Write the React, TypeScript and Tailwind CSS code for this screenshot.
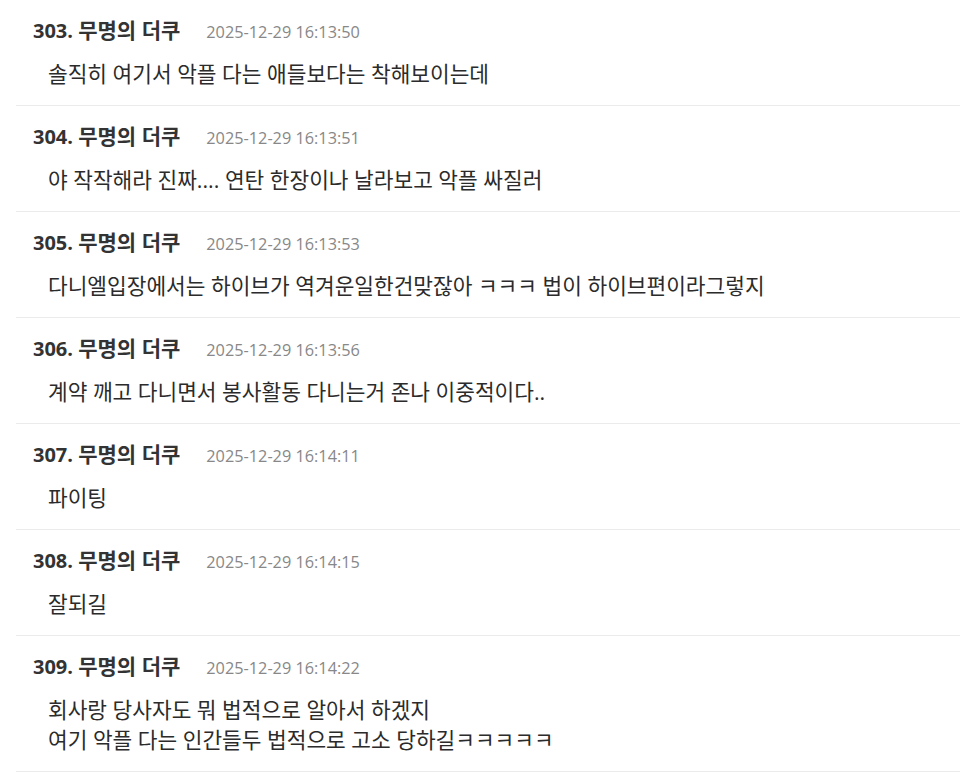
const COMMENTS = [
  { no: 303, time: '2025-12-29 16:13:50', lines: ['솔직히 여기서 악플 다는 애들보다는 착해보이는데'] },
  { no: 304, time: '2025-12-29 16:13:51', lines: ['야 작작해라 진짜.... 연탄 한장이나 날라보고 악플 싸질러'] },
  { no: 305, time: '2025-12-29 16:13:53', lines: ['다니엘입장에서는 하이브가 역겨운일한건맞잖아 ㅋㅋㅋ 법이 하이브편이라그렇지'] },
  { no: 306, time: '2025-12-29 16:13:56', lines: ['계약 깨고 다니면서 봉사활동 다니는거 존나 이중적이다..'] },
  { no: 307, time: '2025-12-29 16:14:11', lines: ['파이팅'] },
  { no: 308, time: '2025-12-29 16:14:15', lines: ['잘되길'] },
  {
    no: 309,
    time: '2025-12-29 16:14:22',
    lines: ['회사랑 당사자도 뭐 법적으로 알아서 하겠지', '여기 악플 다는 인간들두 법적으로 고소 당하길ㅋㅋㅋㅋㅋ'],
  },
];

export default function App() {
  return (
    <div className="min-h-screen bg-white font-['Open_Sans','Noto_Sans_CJK_KR',sans-serif]">
      <ul className="ml-4">
        {COMMENTS.map((c) => (
          <li key={c.no} className="border-b border-[#ebebeb] pt-4 pb-4 pl-[17px]">
            <div className="flex items-baseline h-7 leading-7">
              <span className="font-bold text-[#333]">
                <span className="text-[20px]">{c.no}. </span>
                <span className="text-[21px]">무명의 더쿠</span>
              </span>
              <span className="ml-[26px] text-[16.3px] text-[#888]">{c.time}</span>
            </div>
            <div className="mt-[15px] pl-[15px] text-[21.4px] leading-[30px] text-[#2b2b2b]">
              {c.lines.map((l, i) => (
                <p key={i}>{l}</p>
              ))}
            </div>
          </li>
        ))}
      </ul>
    </div>
  );
}
